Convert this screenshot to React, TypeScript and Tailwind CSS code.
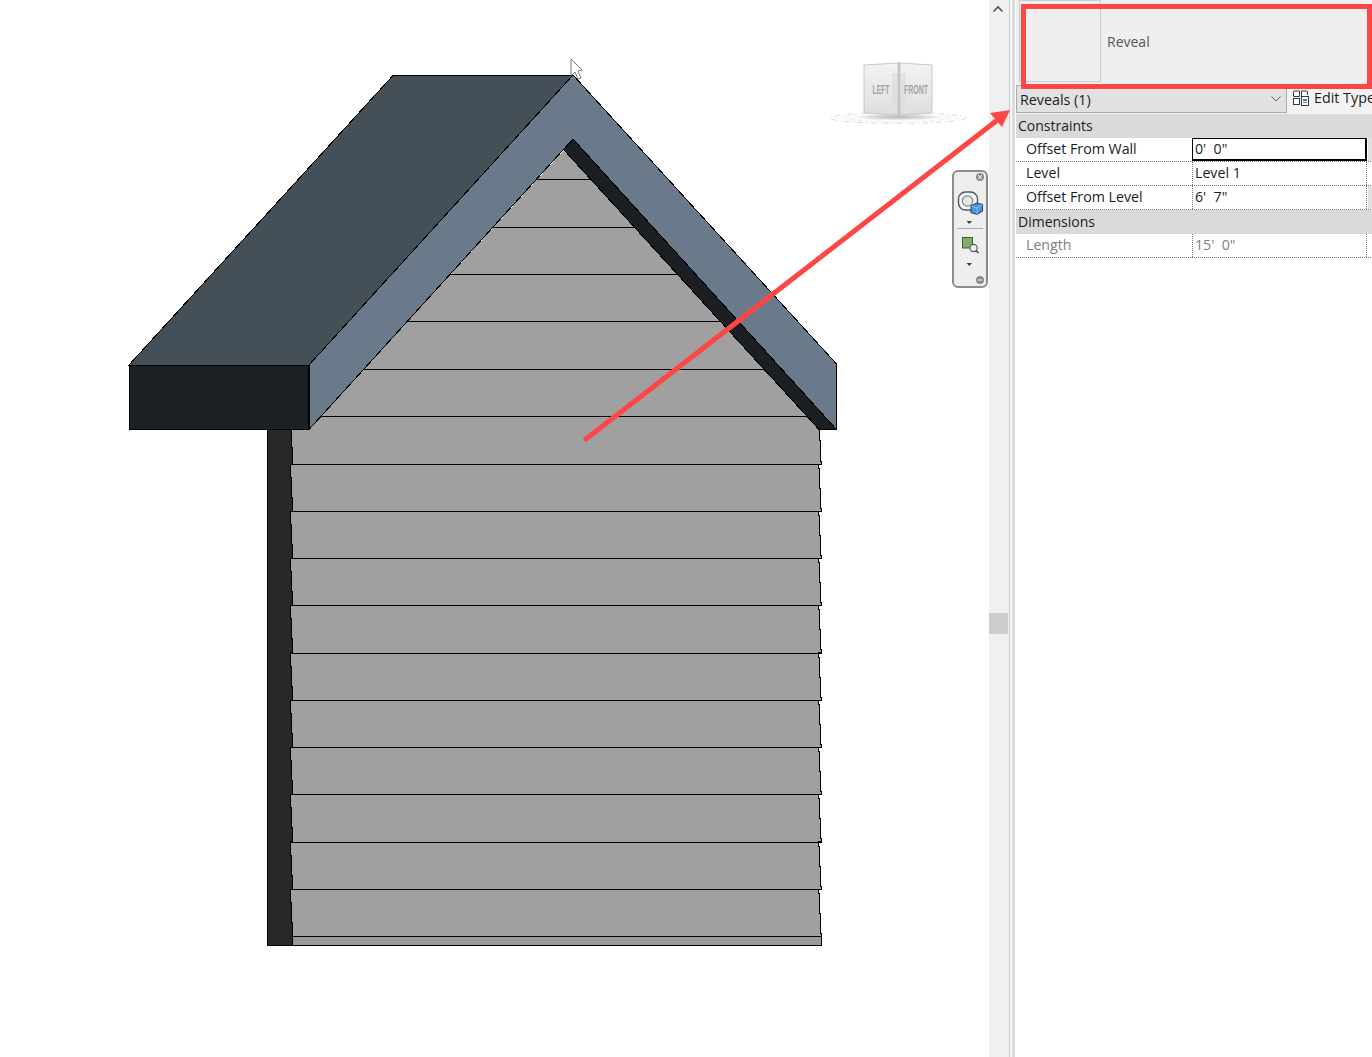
import React from "react";

const font = { fontFamily: '"Open Sans", sans-serif' };

const courses = [464, 511, 558, 605, 653, 700, 747, 794, 842, 889];
const roofLines = [179, 227, 274, 321, 369, 416];

type P = [number, number];

function leftPoints(): P[] {
  const pts: P[] = [[291.5, 430], [291.5, 447], [292.5, 447], [292.5, 464]];
  for (const y of courses) {
    pts.push([290.5, y], [290.5, y + 13], [291.5, y + 13], [291.5, y + 33], [292.5, y + 33], [292.5, y + 47]);
  }
  pts.push([292.5, 945]);
  return pts;
}

function rightPoints(): P[] {
  const pts: P[] = [[819.5, 430], [819.5, 440], [820.5, 440], [820.5, 461], [821.5, 461], [821.5, 464]];
  for (const y of courses) {
    pts.push(
      [818.5, y], [818.5, y + 4], [819.5, y + 4], [819.5, y + 24], [820.5, y + 24],
      [820.5, y + 44], [821.5, y + 44], [821.5, y + 47]
    );
  }
  pts.push([821.5, 945]);
  return pts;
}

const str = (p: P[]) => p.map((q) => q.join(",")).join(" ");

function House() {
  const left = leftPoints();
  const right = rightPoints();
  const wall: P[] = [[564, 150], ...right, ...left.slice().reverse(), [309, 430]];
  return (
    <svg width="989" height="1057" viewBox="0 0 989 1057" className="block" shapeRendering="crispEdges">
      <defs>
        <clipPath id="roofClip">
          <path d="M564 150 L820 430 H309 Z" />
        </clipPath>
      </defs>
      <rect x="268" y="430" width="25" height="515" fill="#282828" />
      <polygon points={str(wall)} fill="#a0a0a0" />
      <rect x="293" y="937" width="529" height="8" fill="#999999" />
      <g clipPath="url(#roofClip)" stroke="#000" strokeWidth="1">
        {roofLines.map((y) => (
          <line key={y} x1="290" x2="830" y1={y + 0.5} y2={y + 0.5} />
        ))}
      </g>
      {courses.concat(936).map((y) => (
        <line key={y} x1="290.5" x2="821.5" y1={y + 0.5} y2={y + 0.5} stroke="#000" strokeWidth="1" />
      ))}
      <polyline points={str(left)} fill="none" stroke="#000" strokeWidth="1" />
      <polyline points={str(right)} fill="none" stroke="#000" strokeWidth="1" />
      <path d="M267.5 430 V945.5 H822" fill="none" stroke="#000" strokeWidth="1" />
      <polygon points="393,75.5 573,75.5 309,365 129,365" fill="#454f58" stroke="#000" strokeWidth="1" />
      <rect x="129.5" y="365.5" width="179" height="64" fill="#1d2125" stroke="#000" strokeWidth="1" />
      <polygon points="573,139 564,150 819,429.5 836.5,429.5" fill="#1b1f24" stroke="#000" strokeWidth="1" />
      <polygon points="573,75 836.5,364 836.5,429.5 573,139 309,429.5 309,365" fill="#6a7a8a" stroke="#000" strokeWidth="1" />
      <path d="M571 59 V76 L575 72 L578 79 L581 78 L578 71 L582 70 Z" fill="#fff" stroke="#555" strokeWidth="0.8" shapeRendering="auto" />
    </svg>
  );
}

function ViewCube() {
  return (
    <svg width="145" height="75" viewBox="825 55 145 75" className="absolute left-[825px] top-[55px]">
      <defs>
        <linearGradient id="cubeFace" x1="0" y1="0" x2="0" y2="1">
          <stop offset="0" stopColor="#f3f3f3" />
          <stop offset="1" stopColor="#dedede" />
        </linearGradient>
        <radialGradient id="cubeShadow">
          <stop offset="0" stopColor="#b5b5b5" />
          <stop offset="0.7" stopColor="#e4e4e4" />
          <stop offset="1" stopColor="#ffffff" />
        </radialGradient>
      </defs>
      <ellipse cx="898" cy="118" rx="68" ry="5.5" fill="#fbfbfb" stroke="#dcdcdc" strokeWidth="1" strokeDasharray="5 3 1 4" />
      <ellipse cx="898" cy="117" rx="52" ry="5" fill="#fbfbfb" stroke="#e8e8e8" strokeWidth="0.7" strokeDasharray="5 3" />
      <ellipse cx="898" cy="117" rx="46" ry="3.5" fill="url(#cubeShadow)" />
      <path d="M864 65 L898 63 V115 L864 113 Z" fill="url(#cubeFace)" stroke="#bdbdbd" strokeWidth="0.8" />
      <path d="M900 63 L932 65 V113 L900 115 Z" fill="url(#cubeFace)" stroke="#bdbdbd" strokeWidth="0.8" />
      <rect x="892" y="73" width="14" height="32" fill="#dadada" opacity="0.6" />
      <line x1="899" y1="62" x2="899" y2="115" stroke="#a9a9a9" strokeWidth="1" />
      <text x="881" y="94" textAnchor="middle" fontSize="13" fill="#a4a4a4" fontWeight="700" fontFamily="'Liberation Sans', sans-serif" textLength="17" lengthAdjust="spacingAndGlyphs">LEFT</text>
      <text x="916" y="94" textAnchor="middle" fontSize="13" fill="#a4a4a4" fontWeight="700" fontFamily="'Liberation Sans', sans-serif" textLength="24" lengthAdjust="spacingAndGlyphs">FRONT</text>
    </svg>
  );
}

function NavBar() {
  return (
    <div className="absolute left-[952px] top-[170px] flex h-[118px] w-[36px] flex-col items-center rounded-[6px] border-2 border-[#8c8c8c] bg-[#eeeeee]">
      <svg width="32" height="114" viewBox="954 172 32 114" className="block">
        <circle cx="980" cy="177" r="4" fill="#8a8a8a" />
        <path d="M978.2 175.2 L981.8 178.8 M981.8 175.2 L978.2 178.8" stroke="#eee" strokeWidth="1.1" />
        <rect x="958.5" y="192" width="19" height="18" rx="7" fill="#f5f5f5" stroke="#4f5964" strokeWidth="1.4" />
        <circle cx="967.5" cy="201" r="5.2" fill="#e6e8ea" stroke="#7d8690" strokeWidth="1.2" />
        <path d="M971 206 L976.5 203 L982.5 204.5 V211 L977 214.5 L971 212.5 Z" fill="#4f94d8" stroke="#1c4f85" strokeWidth="1.1" />
        <path d="M971 206 L977 208 L982.5 204.5 M977 208 V214.5" fill="none" stroke="#a8d0f2" strokeWidth="0.7" />
        <path d="M966.5 221 H972 L969.25 224 Z" fill="#3d3d3d" />
        <line x1="957" y1="228.5" x2="983" y2="228.5" stroke="#a9a9a9" strokeWidth="1" />
        <rect x="962.5" y="237.5" width="10" height="10.5" fill="#86ab6b" stroke="#2f6a1f" strokeWidth="1" />
        <circle cx="973.5" cy="248" r="3.6" fill="#eef2f4" stroke="#555" strokeWidth="1.1" />
        <line x1="976" y1="250.5" x2="978.5" y2="253" stroke="#444" strokeWidth="1.6" />
        <path d="M966.5 263 H972 L969.25 266 Z" fill="#3d3d3d" />
        <circle cx="980" cy="280" r="4" fill="#8a8a8a" />
        <line x1="977.8" y1="280" x2="982.2" y2="280" stroke="#eee" strokeWidth="1.2" />
      </svg>
    </div>
  );
}

function Row({
  label,
  value,
  active,
  muted,
  side,
}: {
  label: string;
  value: string;
  active?: boolean;
  muted?: boolean;
  side?: boolean;
}) {
  const color = muted ? "text-[#808080]" : "text-[#1c1c1c]";
  return (
    <div className={`flex h-[24px] border-b border-dotted border-[#777] text-[14.2px] leading-[21px] ${color}`}>
      <div className="w-[176px] shrink-0 pl-[10px]">{label}</div>
      <div
        className={
          active
            ? "h-[23px] w-[175px] shrink-0 border-2 border-l border-t border-black pl-[2px] leading-[19px]"
            : "h-[23px] w-[175px] shrink-0 border-x border-dotted border-[#777] pl-[2px]"
        }
      >
        {value}
      </div>
      {side && <div className="ml-[1px] h-[23px] flex-1 bg-[#e1e1e1]" />}
    </div>
  );
}

function Header({ title }: { title: string }) {
  return (
    <div className="relative h-[24px] bg-[#dadada] pl-[2px] text-[14px] leading-[24px] text-[#1c1c1c]">
      {title}
      <div className="absolute right-0 top-[6px] h-[2px] w-[2px] bg-[#333]" />
      <div className="absolute right-0 top-[11px] h-[2px] w-[2px] bg-[#333]" />
    </div>
  );
}

export default function App() {
  return (
    <div className="relative flex h-[1057px] w-[1372px] overflow-hidden bg-white" style={font}>
      <div className="relative w-[989px] shrink-0">
        <House />
        <ViewCube />
        <NavBar />
      </div>

      <div className="relative w-[20px] shrink-0 bg-[#f0f0f0]">
        <svg width="12" height="8" viewBox="0 0 12 8" className="absolute left-[3px] top-[5px]">
          <path d="M1.5 6.5 L6 2 L10.5 6.5" fill="none" stroke="#505050" strokeWidth="1.6" />
        </svg>
        <div className="absolute left-0 top-[613px] h-[21px] w-[19px] bg-[#cdcdcd]" />
      </div>
      <div className="w-[1px] shrink-0 bg-[#c8c8c8]" />
      <div className="w-[2px] shrink-0 bg-[#f8f8f8]" />
      <div className="w-[3px] shrink-0 bg-[#dddddd]" />
      <div className="w-[1px] shrink-0 bg-white" />

      <div className="flex-1">
        <div className="flex h-[85px] bg-[#efefef] pl-[3px]">
          <div className="h-[82px] w-[82px] shrink-0 border border-[#cccccc]" />
          <div className="ml-[6px] flex h-[82px] items-center text-[14px] text-[#555555]">Reveal</div>
        </div>
        <div className="flex h-[29px] items-stretch bg-[#f3f3f3]">
          <div className="flex h-[28px] w-[271px] shrink-0 items-center justify-between border border-[#ababab] bg-[#e1e1e1] pl-[3px] pr-[4px] text-[14.3px] text-[#1c1c1c]">
            <span className="pt-[2px]">Reveals (1)</span>
            <svg width="12" height="8" viewBox="0 0 12 8">
              <path d="M1.5 1.5 L6 6 L10.5 1.5" fill="none" stroke="#606060" strokeWidth="1" />
            </svg>
          </div>
          <div className="ml-[5px] flex h-[25px] items-center gap-[5px] whitespace-nowrap text-[14.3px] text-[#1c1c1c]">
            <svg width="17" height="16" viewBox="0 0 17 16" className="shrink-0">
              <path d="M1.5 6.5 V2 Q1.5 1 2.5 1 H7.5 V6.5 Z" fill="#fff" stroke="#3a3a3a" />
              <path d="M9.5 6.5 V1 H14 Q15.5 1 15.5 2 V5" fill="#fff" stroke="#3a3a3a" />
              <rect x="1.5" y="8.5" width="6" height="6" fill="#fff" stroke="#3a3a3a" />
              <rect x="9.5" y="6.5" width="7" height="9" fill="#fff" stroke="#3a3a3a" />
              <rect x="11" y="9" width="4" height="2" fill="#2d7fc1" />
              <rect x="11" y="12" width="4" height="1" fill="#777" />
            </svg>
            <span>Edit Type</span>
          </div>
        </div>
        <Header title="Constraints" />
        <Row label="Offset From Wall" value={`0'\u00a0\u00a00"`} active side />
        <Row label="Level" value="Level 1" />
        <Row label="Offset From Level" value={`6'\u00a0\u00a07"`} side />
        <Header title="Dimensions" />
        <Row label="Length" value={`15'\u00a0\u00a00"`} muted />
      </div>

      {/* annotation overlay */}
      <div className="absolute left-[1021px] top-[4px] h-[85px] w-[351px] border-[5px] border-[#ff4646]" />
      <svg width="1372" height="1057" viewBox="0 0 1372 1057" className="pointer-events-none absolute left-0 top-0">
        <line x1="586" y1="439" x2="1000" y2="118" stroke="#ff4646" strokeWidth="5" strokeLinecap="round" />
        <polygon points="1010,110 1002,127 990,113" fill="#ff4646" />
      </svg>
    </div>
  );
}
